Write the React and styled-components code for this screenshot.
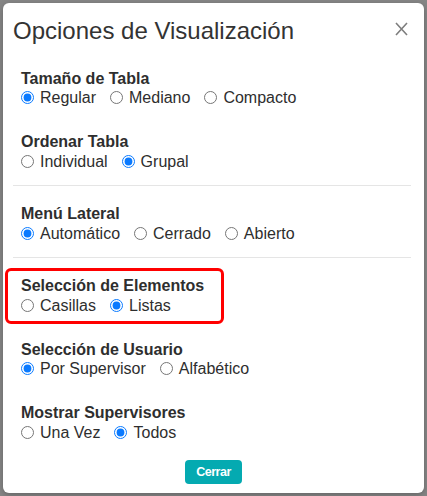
import React from 'react';
import styled, { createGlobalStyle } from 'styled-components';

const GlobalStyle = createGlobalStyle`
  html, body {
    margin: 0;
    padding: 0;
    background: #868686;
  }
  body {
    font-family: "Liberation Sans", Arial, Helvetica, sans-serif;
    color: #333;
  }
`;

const Backdrop = styled.div`
  width: 427px;
  height: 496px;
  box-sizing: border-box;
  padding: 3px 3px 0 3px;
  background: #868686;
  overflow: hidden;
`;

const Modal = styled.div`
  width: 421px;
  background: #fff;
  border-radius: 6px;
  box-shadow: 0 2px 6px rgba(0, 0, 0, 0.25);
  padding-bottom: 9px;
`;

const Header = styled.div`
  display: flex;
  justify-content: space-between;
  align-items: center;
  padding: 15px 16px 0 10px;
`;

const Title = styled.h4`
  margin: 0;
  font-size: 24px;
  font-weight: 400;
  line-height: 26.5px;
  color: #333;
`;

const CloseButton = styled.button`
  border: 0;
  background: none;
  padding: 0;
  margin-top: -4px;
  width: 13px;
  height: 14px;
  display: flex;
  cursor: pointer;
`;

const Body = styled.div`
  padding: 24px 18px 0 18px;
`;

const Section = styled.div`
  position: relative;

  & + & {
    margin-top: 24.5px;
  }

  ${(p) =>
    p.$highlight &&
    `
    &::before {
      content: '';
      position: absolute;
      left: -16px;
      top: -8px;
      width: 219px;
      height: 56px;
      box-sizing: border-box;
      border: 3px solid #ff0000;
      border-radius: 6px;
    }
  `}
`;

const SectionLabel = styled.div`
  font-size: 16px;
  font-weight: 700;
  line-height: 19.5px;
  color: #2e2e2e;
`;

const OptionRow = styled.div`
  display: flex;
  align-items: center;
  gap: 14px;
  height: 19.5px;
`;

const Option = styled.label`
  display: flex;
  align-items: center;
  font-size: 16px;
  line-height: 19.5px;
  color: #2e2e2e;
  cursor: pointer;
`;

const Radio = styled.input`
  width: 13px;
  height: 13px;
  margin: 0 6px 0 0;
  accent-color: #0a7aff;
`;

const Divider = styled.hr`
  border: 0;
  border-top: 1px solid #e5e5e5;
  margin: 14px -5px 18px -8px;
`;

const Footer = styled.div`
  display: flex;
  justify-content: center;
  margin-top: 18px;
`;

const Button = styled.button`
  width: 57px;
  height: 24px;
  border: 0;
  border-radius: 4px;
  background: #04aab1;
  color: #fff;
  font-family: "Liberation Sans", Arial, sans-serif;
  font-size: 12.5px;
  font-weight: 700;
  letter-spacing: -0.5px;
  padding: 0;
  cursor: pointer;
`;

const groups = [
  { name: 'tamano', label: 'Tamaño de Tabla', options: ['Regular', 'Mediano', 'Compacto'], value: 'Regular' },
  { name: 'ordenar', label: 'Ordenar Tabla', options: ['Individual', 'Grupal'], value: 'Grupal', divider: true },
  { name: 'menu', label: 'Menú Lateral', options: ['Automático', 'Cerrado', 'Abierto'], value: 'Automático', divider: true },
  { name: 'seleccion', label: 'Selección de Elementos', options: ['Casillas', 'Listas'], value: 'Listas', highlight: true },
  { name: 'usuario', label: 'Selección de Usuario', options: ['Por Supervisor', 'Alfabético'], value: 'Por Supervisor' },
  { name: 'supervisores', label: 'Mostrar Supervisores', options: ['Una Vez', 'Todos'], value: 'Todos' },
];

function OptionGroup({ group }) {
  return (
    <Section $highlight={group.highlight}>
      <SectionLabel>{group.label}</SectionLabel>
      <OptionRow>
        {group.options.map((opt) => (
          <Option key={opt}>
            <Radio type="radio" name={group.name} defaultChecked={opt === group.value} />
            {opt}
          </Option>
        ))}
      </OptionRow>
    </Section>
  );
}

export default function App() {
  return (
    <>
      <GlobalStyle />
      <Backdrop>
        <Modal>
          <Header>
            <Title>Opciones de Visualización</Title>
            <CloseButton aria-label="Cerrar">
              <svg width="13" height="14" viewBox="0 0 13 14">
                <path d="M1 1 L12 13 M12 1 L1 13" stroke="#7d7d7d" strokeWidth="1.6" fill="none" />
              </svg>
            </CloseButton>
          </Header>
          <Body>
            {groups.map((g) => (
              <React.Fragment key={g.name}>
                <OptionGroup group={g} />
                {g.divider && <Divider />}
              </React.Fragment>
            ))}
            <Footer>
              <Button>Cerrar</Button>
            </Footer>
          </Body>
        </Modal>
      </Backdrop>
    </>
  );
}
